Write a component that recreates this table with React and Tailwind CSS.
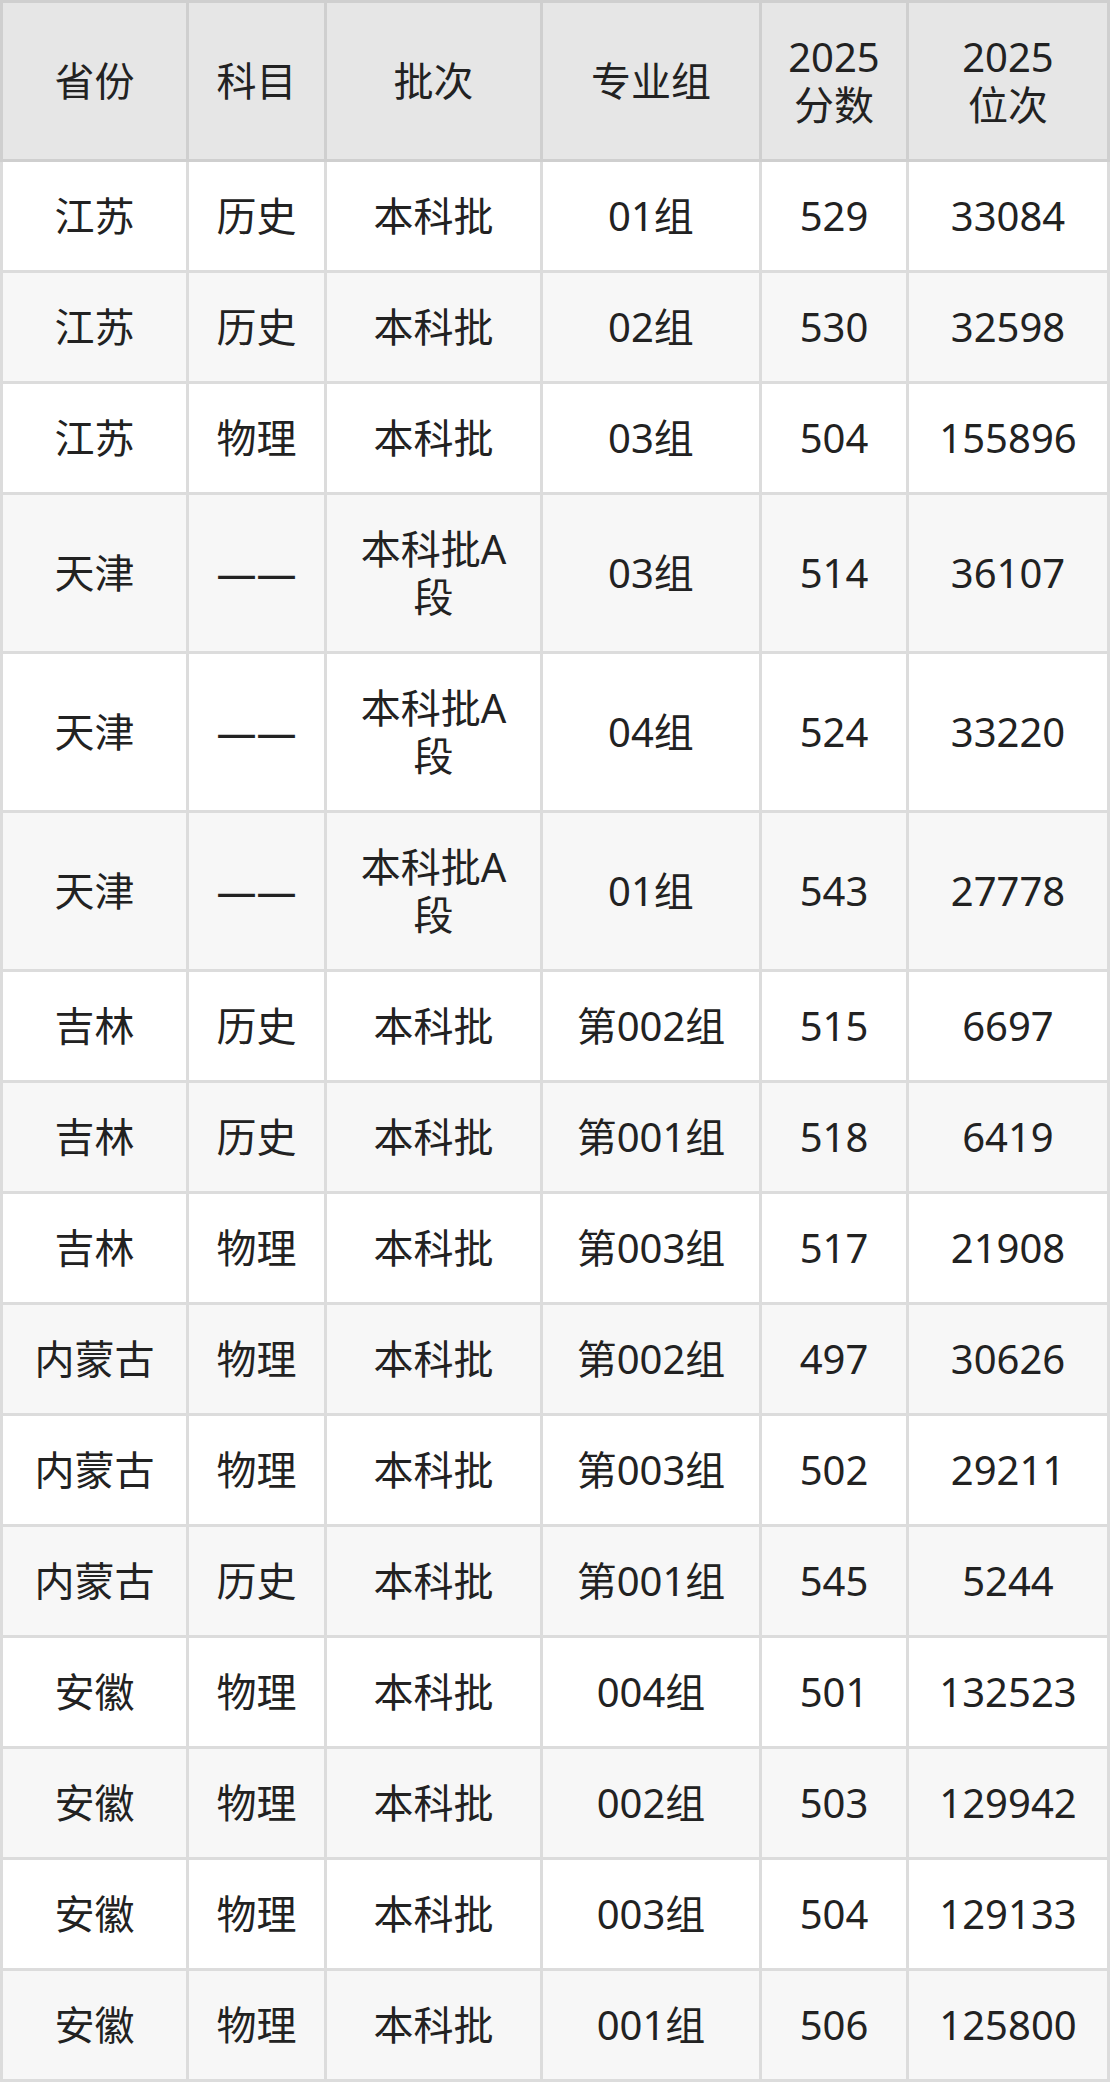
import React from "react";

const rows = [
  ["江苏", "历史", "本科批", "01组", "529", "33084"],
  ["江苏", "历史", "本科批", "02组", "530", "32598"],
  ["江苏", "物理", "本科批", "03组", "504", "155896"],
  ["天津", "——", "本科批A段", "03组", "514", "36107"],
  ["天津", "——", "本科批A段", "04组", "524", "33220"],
  ["天津", "——", "本科批A段", "01组", "543", "27778"],
  ["吉林", "历史", "本科批", "第002组", "515", "6697"],
  ["吉林", "历史", "本科批", "第001组", "518", "6419"],
  ["吉林", "物理", "本科批", "第003组", "517", "21908"],
  ["内蒙古", "物理", "本科批", "第002组", "497", "30626"],
  ["内蒙古", "物理", "本科批", "第003组", "502", "29211"],
  ["内蒙古", "历史", "本科批", "第001组", "545", "5244"],
  ["安徽", "物理", "本科批", "004组", "501", "132523"],
  ["安徽", "物理", "本科批", "002组", "503", "129942"],
  ["安徽", "物理", "本科批", "003组", "504", "129133"],
  ["安徽", "物理", "本科批", "001组", "506", "125800"],
];

const cols = "grid grid-cols-[183px_135px_213px_216px_144px_198px] gap-[3px]";
const cell =
  "flex items-center justify-center text-center px-[16px] py-[30px] leading-[48px]";

function renderText(t) {
  if (t === "本科批A段") {
    return (
      <span>
        本科批A
        <br />段
      </span>
    );
  }
  return <span>{t}</span>;
}

export default function App() {
  return (
    <div
      className="w-[1110px] text-[40px] text-[#222222]"
      style={{ fontFamily: '"Noto Sans", "Noto Sans CJK SC", sans-serif' }}
    >
      <div className={`${cols} bg-[#cfcfcf] p-[3px]`}>
        {["省份", "科目", "批次", "专业组"].map((h) => (
          <div key={h} className={`${cell} bg-[#e6e6e6]`}>
            {h}
          </div>
        ))}
        <div className={`${cell} bg-[#e6e6e6]`}>
          <span>
            2025
            <br />
            分数
          </span>
        </div>
        <div className={`${cell} bg-[#e6e6e6]`}>
          <span>
            2025
            <br />
            位次
          </span>
        </div>
      </div>
      <div className={`${cols} bg-[#dcdcdc] px-[3px] pb-[3px] pt-0`}>
        {rows.map((r, i) =>
          r.map((c, j) => (
            <div
              key={`${i}-${j}`}
              className={`${cell} ${i % 2 === 0 ? "bg-white" : "bg-[#f7f7f7]"}`}
            >
              {renderText(c)}
            </div>
          ))
        )}
      </div>
    </div>
  );
}
